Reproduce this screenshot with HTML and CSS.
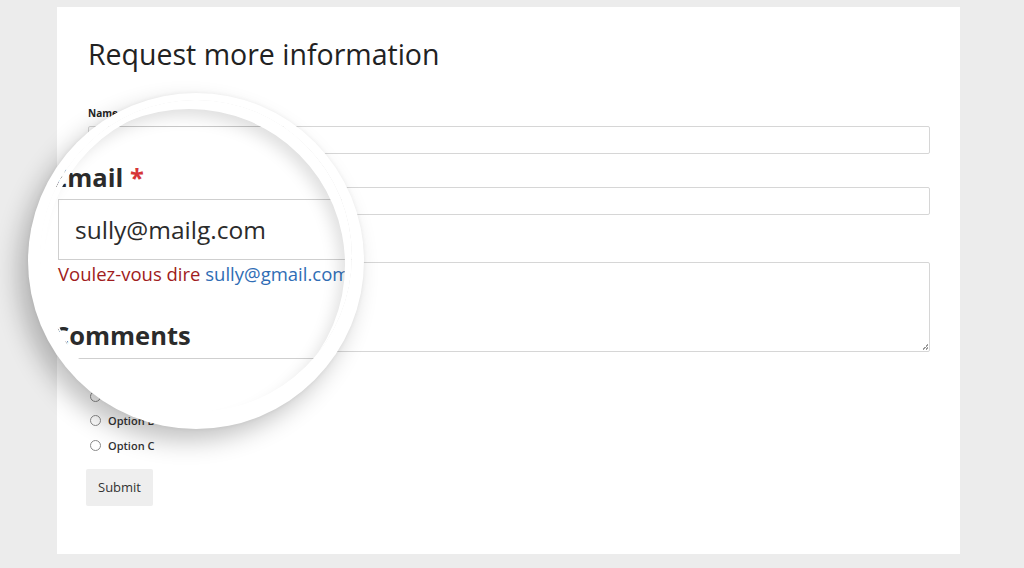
FILE: index.html
```html
<!DOCTYPE html>
<html>
<head>
<meta charset="UTF-8">
<title>Request more information</title>
<link rel="stylesheet" href="styles.css">
</head>
<body>
    <div class="card">
        <h1 class="title">Request more information</h1>

        <div class="field">
            <label class="label">Name</label>
            <div class="input"></div>
        </div>

        <div class="field">
            <label class="label">Email <span class="req">*</span></label>
            <div class="input"></div>
        </div>

        <div class="field field-comments">
            <label class="label">Comments</label>
            <div class="textarea"><span class="grip"></span></div>
        </div>

        <div class="field field-radios">
            <label class="label">Options</label>
            <div class="radio"><span class="dot"></span>Option A</div>
            <div class="radio"><span class="dot"></span>Option B</div>
            <div class="radio"><span class="dot"></span>Option C</div>
        </div>

        <button class="submit">Submit</button>

        <!-- loupe over the email field -->
        <div class="lens">
            <div class="lens-inner">
                <div class="zoom">
                    <div class="z-name"></div>
                    <div class="z-label">Email <span class="req">*</span></div>
                    <div class="z-input">sully@mailg.com</div>
                    <div class="z-hint">Voulez-vous dire <a href="#">sully@gmail.com</a></div>
                    <div class="z-label z-comments">Comments</div>
                    <div class="z-textarea"></div>
                </div>
            </div>
        </div>
    </div>
</body>
</html>
```

FILE: styles.css
```css
*{
    box-sizing: border-box;
}

body{
    margin: 0;
    padding: 7px 0 0 57px;
    background-color: #ececec;
    font-family: "Open Sans", "DejaVu Sans", sans-serif;
    color: #333;
}

.card{
    position: relative;
    width: 903px;
    height: 547px;
    background-color: #fff;
    padding: 30px 30px 0 31px;
}

.title{
    margin: 0;
    font-size: 28.5px;
    line-height: 34px;
    font-weight: 400;
    color: #222;
}

.field{
    margin-top: 13px;
}

.field:first-of-type{
    margin-top: 35px;
}

.label{
    display: block;
    font-size: 10px;
    line-height: 14px;
    font-weight: 700;
    color: #222;
    margin-bottom: 6px;
}

.req{
    color: #d63637;
}

.input{
    height: 28px;
    border: 1px solid #d6d6d6;
    border-radius: 2px;
    background-color: #fff;
}

.field-comments{
    margin-top: 27px;
}

.textarea{
    position: relative;
    height: 90px;
    border: 1px solid #d6d6d6;
    border-radius: 2px;
}

.grip{
    position: absolute;
    right: 1px;
    bottom: 1px;
    width: 6px;
    height: 6px;
    background: linear-gradient(135deg, transparent 50%, #999 50%, #999 60%, transparent 60%, transparent 75%, #999 75%, #999 85%, transparent 85%);
}

.field-radios{
    margin-top: 12px;
}

.radio{
    display: flex;
    align-items: center;
    height: 24.5px;
    font-size: 11px;
    font-weight: 600;
    color: #333;
}

.dot{
    width: 11px;
    height: 11px;
    margin: 0 7px 0 2px;
    border: 1px solid #8a8a8a;
    border-radius: 50%;
    background-color: #fff;
}

.submit{
    display: block;
    margin: 11px 0 0 -2px;
    height: 37px;
    padding: 0 12px;
    border: 0;
    border-radius: 2px;
    background-color: #eee;
    font-family: "Open Sans", "DejaVu Sans", sans-serif;
    font-size: 13px;
    color: #333;
}

/* magnifier */
.lens{
    position: absolute;
    left: -29px;
    top: 86px;
    width: 336px;
    height: 336px;
    padding: 7px 12px 17px 12px;
    border-radius: 50%;
    background-color: #fff;
    box-shadow: -10px 12px 24px rgba(0, 0, 0, 0.24), 0 0 4px rgba(0, 0, 0, 0.06);
}

.lens-inner{
    position: relative;
    width: 312px;
    height: 312px;
    border-radius: 50%;
    overflow: hidden;
    background-color: #fff;
}

.lens-inner::after{
    content: "";
    position: absolute;
    inset: 0;
    border-radius: 50%;
    box-shadow: inset -7px 9px 0 #fff, inset 4px 4px 0 #fff, inset -12px 16px 16px rgba(0, 0, 0, 0.13);
}

.zoom{
    width: 400px;
    padding-left: 18px;
}

.z-name{
    height: 27px;
    border: 1px solid #c9c9c9;
    border-top: 0;
}

.z-label{
    margin: 35px 0 0 -5px;
    font-size: 25.5px;
    line-height: 30px;
    font-weight: 700;
    color: #2b2b2b;
}

.z-comments{
    margin-top: 35px;
}

.z-input{
    margin-top: 7px;
    height: 61px;
    padding-left: 16px;
    border: 1px solid #cfcfcf;
    font-size: 24.5px;
    line-height: 59px;
    color: #2b2b2b;
}

.z-hint{
    margin-top: 3px;
    font-size: 18.5px;
    line-height: 22px;
    color: #a01c20;
}

.z-hint a{
    color: #2f6db5;
    text-decoration: none;
}

.z-textarea{
    margin-top: 8px;
    height: 80px;
    border-top: 1px solid #cfcfcf;
}
```
